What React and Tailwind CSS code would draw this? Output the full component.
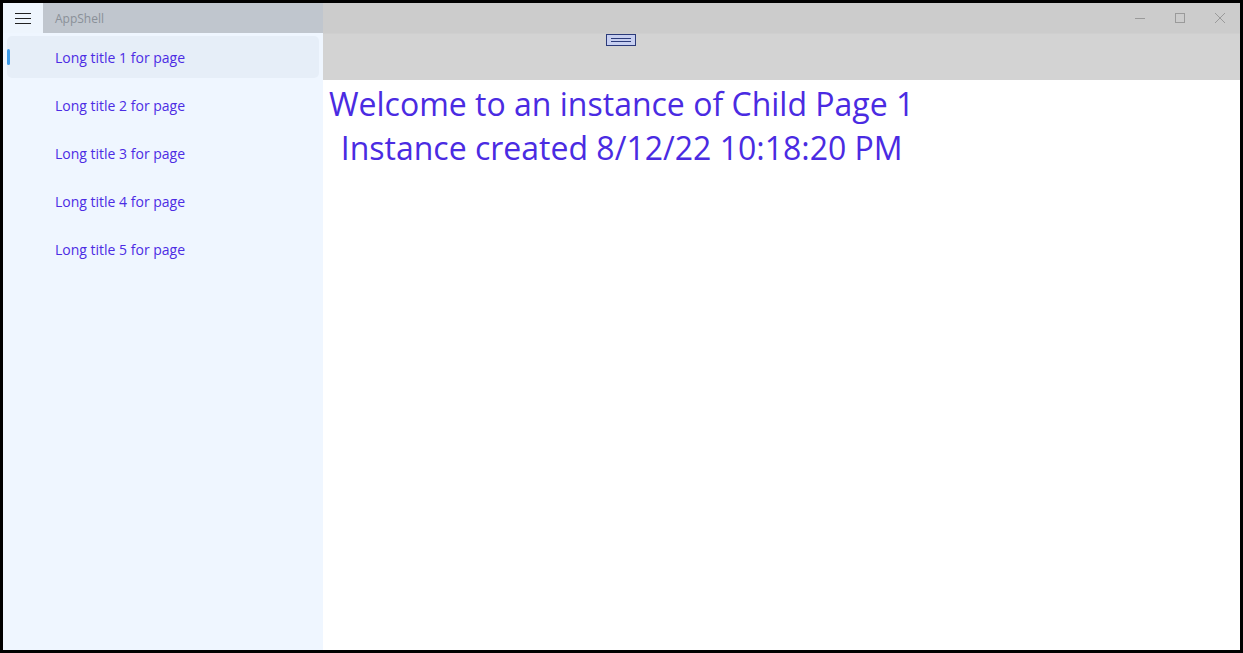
import React from "react";

const pages = [1, 2, 3, 4, 5];

function Hamburger() {
  return (
    <svg width="16" height="12" viewBox="0 0 16 12" fill="none">
      <path d="M0 1.5h16M0 6.5h16M0 11.5h16" stroke="#222222" strokeWidth="1" />
    </svg>
  );
}

function WindowControls() {
  return (
    <div className="flex h-full items-center">
      <div className="w-[40px] flex justify-center">
        <svg width="10" height="10" viewBox="0 0 10 10">
          <path d="M0 5.5h10" stroke="#9a9a9a" strokeWidth="1" />
        </svg>
      </div>
      <div className="w-[40px] flex justify-center">
        <svg width="10" height="10" viewBox="0 0 10 10">
          <rect x="0.5" y="0.5" width="9" height="9" fill="none" stroke="#9a9a9a" strokeWidth="1" />
        </svg>
      </div>
      <div className="w-[40px] flex justify-center">
        <svg width="10" height="10" viewBox="0 0 10 10">
          <path d="M0 0L10 10M10 0L0 10" stroke="#9a9a9a" strokeWidth="1" />
        </svg>
      </div>
    </div>
  );
}

export default function App() {
  return (
    <div
      className="w-[1243px] h-[653px] bg-black p-[3px]"
      style={{ fontFamily: '"Open Sans", "Noto Sans", sans-serif' }}
    >
      <div className="flex h-full bg-white">
        {/* navigation pane */}
        <aside className="w-[320px] flex flex-col bg-[#eff6ff]">
          <div className="h-[30px] flex">
            <div className="w-[40px] flex items-center justify-center bg-[#eef5fd]">
              <Hamburger />
            </div>
            <div className="flex-1 flex items-center pl-[12px] pt-[2px] bg-[#c0c6ce] text-[12px] text-[#8a9098]">
              AppShell
            </div>
          </div>
          <nav className="flex flex-col gap-[6px] pt-[3px] px-[4px]">
            {pages.map((n) => (
              <div
                key={n}
                className={
                  n === 1
                    ? "relative h-[42px] flex items-center pl-[48px] rounded-[5px] bg-[#e6eef8] text-[14px] text-[#4c2ce4]"
                    : "relative h-[42px] flex items-center pl-[48px] text-[14px] text-[#4c2ce4]"
                }
              >
                {n === 1 && (
                  <span className="absolute left-0 top-[13px] w-[3px] h-[16px] rounded-full bg-[#3d9be9]" />
                )}
                Long title {n} for page
              </div>
            ))}
          </nav>
        </aside>

        {/* content area */}
        <main className="flex-1 flex flex-col">
          <div className="h-[30px] flex justify-end bg-[#cccccc]">
            <WindowControls />
          </div>
          <div className="h-[47px] bg-[#d3d3d3] border-t border-[#cfcfcf]">
            <div className="w-[596px] flex justify-center">
              <div className="w-[30px] h-[12px] flex flex-col items-center justify-center gap-[2px] bg-[#c7cff0] border border-[#2b3a7a]">
                <span className="block w-[20px] h-px bg-[#2b3a7a]" />
                <span className="block w-[20px] h-px bg-[#2b3a7a]" />
              </div>
            </div>
          </div>
          <div className="pl-[6px] pt-[2px]">
            <div className="inline-block text-center text-[32px] leading-[43px] text-[#4a2be2]">
              <div>Welcome to an instance of Child Page 1</div>
              <div className="mt-[1px]">Instance created 8/12/22 10:18:20 PM</div>
            </div>
          </div>
        </main>
      </div>
    </div>
  );
}
